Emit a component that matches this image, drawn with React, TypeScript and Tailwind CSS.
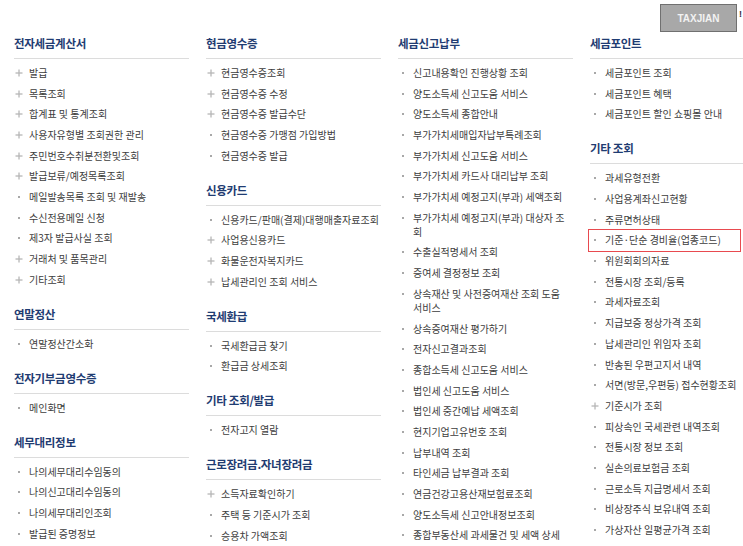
import React from "react";

type Item = { t: string; plus?: boolean; mark?: boolean };
type Section = { title: string; items: Item[] };

const P = (t: string): Item => ({ t, plus: true });
const B = (t: string): Item => ({ t });

const columns: Section[][] = [
  [
    {
      title: "전자세금계산서",
      items: [
        P("발급"),
        P("목록조회"),
        P("합계표 및 통계조회"),
        P("사용자유형별 조회권한 관리"),
        P("주민번호수취분전환및조회"),
        P("발급보류/예정목록조회"),
        B("메일발송목록 조회 및 재발송"),
        B("수신전용메일 신청"),
        B("제3자 발급사실 조회"),
        P("거래처 및 품목관리"),
        P("기타조회"),
      ],
    },
    { title: "연말정산", items: [B("연말정산간소화")] },
    { title: "전자기부금영수증", items: [B("메인화면")] },
    {
      title: "세무대리정보",
      items: [B("나의세무대리수임동의"), B("나의신고대리수임동의"), B("나의세무대리인조회"), B("발급된 증명정보")],
    },
  ],
  [
    {
      title: "현금영수증",
      items: [
        P("현금영수증조회"),
        P("현금영수증 수정"),
        P("현금영수증 발급수단"),
        B("현금영수증 가맹점 가입방법"),
        B("현금영수증 발급"),
      ],
    },
    {
      title: "신용카드",
      items: [
        B("신용카드/판매(결제)대행매출자료조회"),
        P("사업용신용카드"),
        P("화물운전자복지카드"),
        P("납세관리인 조회 서비스"),
      ],
    },
    { title: "국세환급", items: [B("국세환급금 찾기"), B("환급금 상세조회")] },
    { title: "기타 조회/발급", items: [B("전자고지 열람")] },
    {
      title: "근로장려금.자녀장려금",
      items: [P("소득자료확인하기"), B("주택 등 기준시가 조회"), B("승용차 가액조회")],
    },
  ],
  [
    {
      title: "세금신고납부",
      items: [
        B("신고내용확인 진행상황 조회"),
        B("양도소득세 신고도움 서비스"),
        B("양도소득세 종합안내"),
        B("부가가치세매입자납부특례조회"),
        B("부가가치세 신고도움 서비스"),
        B("부가가치세 카드사 대리납부 조회"),
        B("부가가치세 예정고지(부과) 세액조회"),
        B("부가가치세 예정고지(부과) 대상자 조\n회"),
        B("수출실적명세서 조회"),
        B("증여세 결정정보 조회"),
        B("상속재산 및 사전증여재산 조회 도움\n서비스"),
        B("상속증여재산 평가하기"),
        B("전자신고결과조회"),
        B("종합소득세 신고도움 서비스"),
        B("법인세 신고도움 서비스"),
        B("법인세 중간예납 세액조회"),
        B("현지기업고유번호 조회"),
        B("납부내역 조회"),
        B("타인세금 납부결과 조회"),
        B("연금건강고용산재보험료조회"),
        B("양도소득세 신고안내정보조회"),
        B("종합부동산세 과세물건 및 세액 상세"),
      ],
    },
  ],
  [
    {
      title: "세금포인트",
      items: [B("세금포인트 조회"), B("세금포인트 혜택"), B("세금포인트 할인 쇼핑몰 안내")],
    },
    {
      title: "기타 조회",
      items: [
        B("과세유형전환"),
        B("사업용계좌신고현황"),
        B("주류면허상태"),
        { t: "기준·단순 경비율(업종코드)", mark: true },
        B("위원회회의자료"),
        B("전통시장 조회/등록"),
        B("과세자료조회"),
        B("지급보증 정상가격 조회"),
        B("납세관리인 위임자 조회"),
        B("반송된 우편고지서 내역"),
        B("서면(방문,우편등) 접수현황조회"),
        P("기준시가 조회"),
        B("피상속인 국세관련 내역조회"),
        B("전통시장 정보 조회"),
        B("실손의료보험금 조회"),
        B("근로소득 지급명세서 조회"),
        B("비상장주식 보유내역 조회"),
        B("가상자산 일평균가격 조회"),
      ],
    },
  ],
];

function PlusIcon() {
  return (
    <svg width="8" height="8" viewBox="0 0 8 8" className="block">
      <path d="M4 0.5v7M0.5 4h7" stroke="#a0a0a0" strokeWidth="1" fill="none" />
      <rect x="3.5" y="3.5" width="1" height="1" fill="#d4d4d4" />
    </svg>
  );
}

function Row({ item }: { item: Item }) {
  const lines = item.t.split("\n");
  return (
    <li className="relative flex py-[3.35px] leading-[14px] whitespace-nowrap">
      <span className="flex w-[15px] shrink-0 h-[14px] items-center">
        <span className="flex w-[9px] justify-center">
          {item.plus ? <PlusIcon /> : <span className="block w-[2px] h-[2px] bg-[#a8a8a8]" />}
        </span>
      </span>
      <span>
        {lines.map((l, i) => (
          <span key={i} className="block">
            {l}
          </span>
        ))}
      </span>
      {item.mark && (
        <span className="absolute -left-[2px] -top-[1px] -bottom-[1px] w-[153px] border border-[#e84a4f]" />
      )}
    </li>
  );
}

export default function App() {
  return (
    <div
      className="relative w-[743px] h-[546px] overflow-hidden bg-white"
      style={{ fontFamily: '"Noto Sans CJK KR", "Noto Sans", sans-serif' }}
    >
      <div className="grid grid-cols-[175px_175px_175px_175px] gap-x-[17px] pl-[14px] pt-[35px]">
        {columns.map((col, ci) => (
          <div key={ci}>
            {col.map((sec, si) => (
              <div key={si} className={si > 0 ? "mt-[15.65px]" : ""}>
                <h2 className="text-[11.5px] font-bold leading-[16px] tracking-[-0.3px] text-[#1f3c72] pb-[7px] border-b border-[#dcdcdc]">
                  {sec.title}
                </h2>
                <ul className="pt-[3.65px] text-[10px] tracking-[0px] text-[#3d3d3d]">
                  {sec.items.map((it, ii) => (
                    <Row key={ii} item={it} />
                  ))}
                </ul>
              </div>
            ))}
          </div>
        ))}
      </div>

      <div
        className="absolute left-[660px] top-[4px] w-[77px] h-[28px] flex items-center justify-center bg-[#a8a8a8] border border-[#707070] text-[10px] font-bold text-[#f2f2f2]"
        style={{ fontFamily: '"Liberation Sans", Arial, sans-serif' }}
      >
        TAXJIAN
      </div>
      <span
        className="absolute left-[739px] top-[10px] text-[9px] font-bold text-[#3a2a3a] leading-none"
        style={{ fontFamily: '"Liberation Sans", Arial, sans-serif' }}
      >
        !
      </span>
    </div>
  );
}
